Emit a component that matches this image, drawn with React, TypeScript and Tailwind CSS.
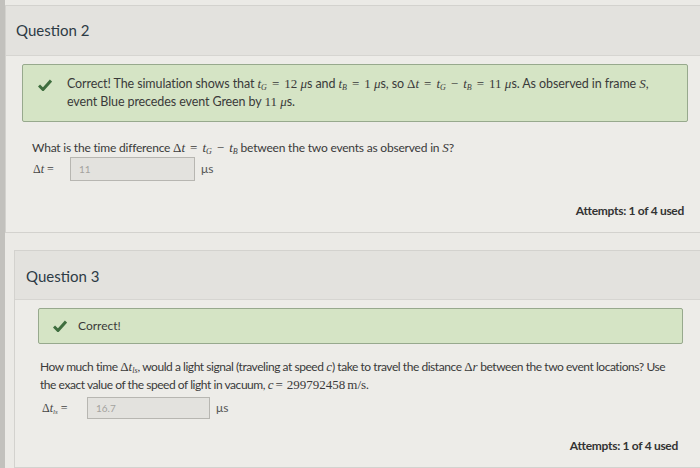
import React from 'react';

const serif = { fontFamily: '"Liberation Serif", "DejaVu Serif", serif' };

function M({ children }: { children: React.ReactNode }) {
  return (
    <span className="italic text-[13px] tracking-normal" style={serif}>
      {children}
    </span>
  );
}

function R({ children, tight }: { children: React.ReactNode; tight?: boolean }) {
  return (
    <span className={`text-[13px] tracking-normal ${tight ? 'mx-[2px]' : 'mx-[5px]'}`} style={serif}>
      {children}
    </span>
  );
}

// upright Delta followed by italic variable, e.g. "Δt"
function D({ v }: { v: string }) {
  return (
    <span className="text-[13px] tracking-normal" style={serif}>
      Δ<i>{v}</i>
    </span>
  );
}

// upright number followed by italic mu, e.g. "12 μs"
function Us({ n }: { n: string }) {
  return (
    <span className="text-[13px] tracking-normal" style={serif}>
      {n} <i>μ</i>
    </span>
  );
}

function Sub({ children }: { children: React.ReactNode }) {
  return (
    <sub className="text-[8px] italic tracking-normal" style={serif}>
      {children}
    </sub>
  );
}

function Check() {
  return (
    <svg width="14" height="12" viewBox="0 0 14 12" className="shrink-0">
      <path d="M1 6.5 L5 10.5 L13 1.5" fill="none" stroke="#3f6e3f" strokeWidth="3" />
    </svg>
  );
}

function Answer({
  label,
  value,
  labelWidth,
  width,
  height,
}: {
  label: React.ReactNode;
  value: string;
  labelWidth: string;
  width: string;
  height: string;
}) {
  return (
    <div className="flex items-center gap-[9px]">
      <div className={`${labelWidth} text-[12px] text-[#444] whitespace-nowrap`}>{label}</div>
      <div
        className={`${height} ${width} bg-[#e3e2de] border border-[#b7b6b1] flex items-center px-[8px] text-[10px] text-[#a3a29e]`}
      >
        {value}
      </div>
      <span className="text-[12px] text-[#555] ml-[-3px]">μs</span>
    </div>
  );
}

export default function App() {
  return (
    <div
      className="w-[700px] h-[468px] overflow-hidden bg-[#ebeae6] flex text-[#3a3a3a]"
      style={{ fontFamily: 'Lato, "Open Sans", sans-serif' }}
    >
      {/* left screen edge */}
      <div className="w-[5px] bg-[#c2c1bd] shrink-0" />
      <div className="flex-1 flex flex-col pt-[5px]">
        {/* Question 2 */}
        <div className="border border-[#d3d2ce] bg-[#edece8] mr-[-20px]">
          <div className="h-[50px] bg-[#e3e2de] border-b border-[#d6d5d1] flex items-center pl-[10px] text-[15px] text-[#2d3b45]">
            Question 2
          </div>
          <div className="pl-[16px] pr-[31px] pt-[8px] pb-[12px]">
            <div className="flex gap-[15px] items-start bg-[#d5e4c5] border border-[#97a98d] rounded-[2px] pl-[15px] py-[10px] text-[12.5px] leading-[18px] tracking-[-0.1px]">
              <div className="pt-[4px]">
                <Check />
              </div>
              <div>
                Correct! The simulation shows that <M>t</M>
                <Sub>G</Sub>
                <R>=</R>
                <Us n="12" />s and <M>t</M>
                <Sub>B</Sub>
                <R>=</R>
                <Us n="1" />s, so <D v="t" />
                <R>=</R>
                <M>t</M>
                <Sub>G</Sub>
                <R>−</R>
                <M>t</M>
                <Sub>B</Sub>
                <R>=</R>
                <Us n="11" />s. As observed in frame <M>S</M>,
                <br />
                event Blue precedes event Green by <Us n="11" />s.
              </div>
            </div>
            <div className="mt-[17px] pl-[10px] text-[12px] leading-[18px] tracking-[-0.2px]">
              What is the time difference <D v="t" />
              <R>=</R>
              <M>t</M>
              <Sub>G</Sub>
              <R>−</R>
              <M>t</M>
              <Sub>B</Sub> between the two events as observed in <M>S</M>?
            </div>
            <div className="pl-[11px]">
              <Answer
                label={
                  <span style={serif} className="text-[12px]">
                    Δ<i>t</i> =
                  </span>
                }
                value="11"
                labelWidth="w-[28px]"
                width="w-[125px]"
                height="h-[24px]"
              />
            </div>
            <div className="mt-[21px] leading-[18px] text-right text-[12px] font-bold text-[#333] tracking-[-0.3px] pr-[4px]">
              Attempts: 1 of 4 used
            </div>
          </div>
        </div>

        {/* Question 3 */}
        <div className="mt-[17px] ml-[9px] border border-[#d3d2ce] bg-[#edece8] mr-[-20px] flex-1">
          <div className="h-[49px] bg-[#e3e2de] border-b border-[#d6d5d1] flex items-center pl-[11px] pt-[2px] text-[15px] text-[#2d3b45]">
            Question 3
          </div>
          <div className="pl-[23px] pr-[36px] pt-[8px]">
            <div className="flex gap-[11px] items-center bg-[#d5e4c5] border border-[#97a98d] rounded-[2px] pl-[14px] h-[36px] text-[12px]">
              <Check />
              <span>Correct!</span>
            </div>
            <div className="mt-[14px] pl-[2px] text-[12px] leading-[18px] tracking-[-0.45px]">
              How much time <D v="t" />
              <Sub>ls</Sub>, would a light signal (traveling at speed <M>c</M>) take to travel the distance{' '}
              <D v="r" /> between the two event locations? Use the exact value of the speed of light in vacuum,{' '}
              <M>c</M>
              <R tight>=</R>
              <R tight>299792458</R>
              <span style={serif} className="text-[13px] tracking-normal">
                m/s
              </span>
              .
            </div>
            <div className="mt-[3px] pl-[4px]">
              <Answer
                label={
                  <span style={serif} className="text-[12px]">
                    Δ<i>t</i>
                    <sub className="text-[7px] italic">ls</sub> =
                  </span>
                }
                value="16.7"
                labelWidth="w-[36px]"
                width="w-[123px]"
                height="h-[22px]"
              />
            </div>
            <div className="mt-[18px] leading-[18px] text-right text-[12px] font-bold text-[#333] tracking-[-0.3px] pr-[5px]">
              Attempts: 1 of 4 used
            </div>
          </div>
        </div>
      </div>
    </div>
  );
}
